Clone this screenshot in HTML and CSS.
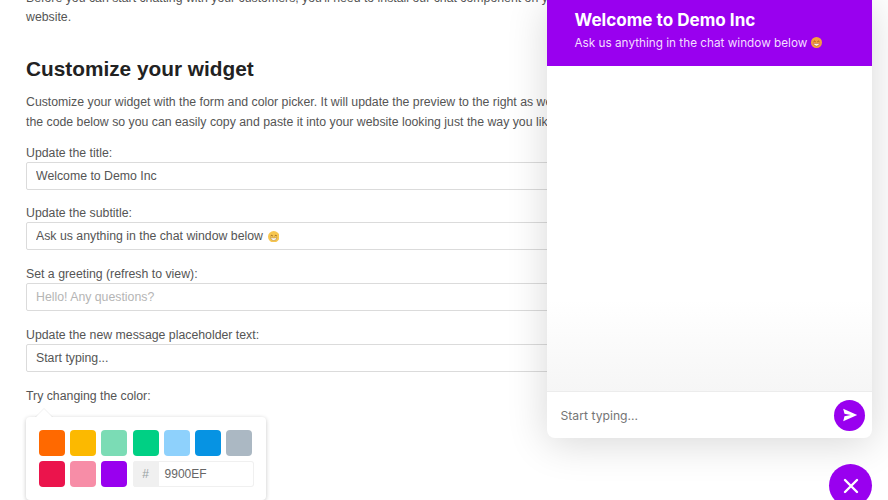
FILE: index.html
```html
<!DOCTYPE html>
<html lang="en">
<head>
<meta charset="utf-8">
<title>Customize your widget</title>
<link rel="stylesheet" href="styles.css">
</head>
<body>
<main class="page">
  <p class="copy">Before you can start chatting with your customers, you'll need to install our chat component on your website.</p>
  <h2 class="heading">Customize your widget</h2>
  <p class="copy lead">Customize your widget with the form and color picker. It will update the preview to the right as well as the code below so you can easily copy and paste it into your website looking just the way you like!</p>
  <form class="form">
    <label class="field"><span class="label">Update the title:</span><input class="input" value="Welcome to Demo Inc"></label>
    <label class="field"><span class="label">Update the subtitle:</span>
      <span class="input-wrap"><input class="input" value="Ask us anything in the chat window below"><svg class="emoji emoji-form" viewBox="0 0 20 20" aria-hidden="true"><circle cx="10" cy="10" r="10" fill="#f7c64f"/><path d="M5 8.200q1.500-2 3 0M12 8.200q1.500-2 3 0" fill="none" stroke="#7a4a1c" stroke-width="1.300" stroke-linecap="round"/><path d="M4.500 11.500q5.500 1.500 11 0q-1 5-5.500 5t-5.500-5z" fill="#fff" stroke="#9a6a24" stroke-width=".8"/></svg></span></label>
    <label class="field"><span class="label">Set a greeting (refresh to view):</span><input class="input" placeholder="Hello! Any questions?"></label>
    <label class="field"><span class="label">Update the new message placeholder text:</span><input class="input" value="Start typing..."></label>
    <div class="field">
      <span class="label">Try changing the color:</span>
      <div class="picker">
        <span class="swatch c1"></span><span class="swatch c2"></span><span class="swatch c3"></span><span class="swatch c4"></span><span class="swatch c5"></span><span class="swatch c6"></span><span class="swatch c7"></span>
        <span class="swatch c8"></span><span class="swatch c9"></span><span class="swatch c10"></span>
        <div class="hex"><span class="hash">#</span><span class="hex-value">9900EF</span></div>
      </div>
    </div>
  </form>
</main>

<aside class="widget">
  <header class="widget-head">
    <h1 class="widget-title">Welcome to Demo Inc</h1>
    <p class="widget-sub">Ask us anything in the chat window below <svg class="emoji emoji-head" viewBox="0 0 20 20" aria-hidden="true"><circle cx="10" cy="10" r="10" fill="#f5a13c"/><path d="M5 8.200q1.500-2 3 0M12 8.200q1.500-2 3 0" fill="none" stroke="#7a3a14" stroke-width="1.300" stroke-linecap="round"/><path d="M4.500 11.500q5.500 1.500 11 0q-1 5-5.500 5t-5.500-5z" fill="#fff" stroke="#a04a20" stroke-width=".8"/><circle cx="4" cy="12" r="2" fill="#ee7a6a" opacity=".6"/><circle cx="16" cy="12" r="2" fill="#ee7a6a" opacity=".6"/></svg></p>
  </header>
  <div class="widget-body"></div>
  <footer class="widget-foot">
    <span class="composer">Start typing...</span>
    <button class="send" type="button" aria-label="Send"><svg viewBox="0 0 20 20" width="16" height="16"><path d="M1.500 2.200 19 10 1.500 17.800l1.600-6.300L11 10 3.100 8.500z" fill="#fff"/></svg></button>
  </footer>
</aside>
<button class="toggle" type="button" aria-label="Close"><svg viewBox="0 0 20 20" width="20" height="20"><path d="M4 4l12 12M16 4 4 16" stroke="#fff" stroke-width="2.400" stroke-linecap="round"/></svg></button>
</body>
</html>
```
FILE: styles.css
```css
* { box-sizing: border-box; }
html, body { height: 100%; }
body {
  margin: 0;
  overflow: hidden;
  background: #fff;
  color: #555;
  font: 12.300px/19px "Liberation Sans", Arial, sans-serif;
}
.page {
  width: 630px;
  margin-top: -11px;
  padding-left: 26px;
}
.copy { width: 565px; margin: 0; }
.heading {
  margin: 25px 0 8px;
  color: #222;
  font-size: 20.800px;
  line-height: 33px;
  font-weight: 700;
}
.lead { margin-bottom: 11.500px; line-height: 19.500px; }
.form { display: flex; flex-direction: column; gap: 14.800px; }
.field { display: block; }
.label { display: block; height: 18px; line-height: 18px; }
.input-wrap { display: block; position: relative; }
.input {
  display: block;
  width: 100%;
  height: 28px;
  padding: 0 9px;
  border: 1px solid #dbdbdb;
  border-radius: 2px;
  background: #fff;
  color: #555;
  font: inherit;
  outline: 0;
}
.input::placeholder { color: #b5b5b5; opacity: 1; }
.emoji { display: inline-block; }
.emoji-form { position: absolute; left: 241.500px; top: 8.500px; width: 11.500px; height: 11.500px; }
.picker {
  position: relative;
  display: grid;
  grid-template-columns: repeat(7, 26px);
  grid-auto-rows: 26px;
  gap: 5px 5.200px;
  width: 240px;
  margin-top: 12px;
  padding: 13px;
  background: #fff;
  border-radius: 4px;
  box-shadow: 0 1px 4px rgba(0,0,0,.22);
}
.picker::before {
  content: "";
  position: absolute;
  left: 9px;
  top: -8px;
  border: solid transparent;
  border-width: 0 9px 9px;
  border-bottom-color: #fff;
  filter: drop-shadow(0 -1px 0 rgba(0,0,0,.06));
}
.swatch { border-radius: 4px; }
.c1 { background: #ff6900; }
.c2 { background: #fcb900; }
.c3 { background: #7bdcb5; }
.c4 { background: #00d084; }
.c5 { background: #8ed1fc; }
.c6 { background: #0693e3; }
.c7 { background: #abb8c3; }
.c8 { background: #eb144c; }
.c9 { background: #f78da7; }
.c10 { background: #9900ef; }
.hex {
  grid-column: span 4;
  display: flex;
  width: 121px;
  height: 26px;
  border-radius: 3px;
  box-shadow: inset 0 0 0 1px #f0f0f0;
  overflow: hidden;
  font-size: 12px;
}
.hash {
  flex: 0 0 26px;
  background: #f0f0f0;
  color: #98a1a4;
  text-align: center;
  line-height: 26px;
}
.hex-value { padding-left: 6px; color: #666; line-height: 26px; }

.widget {
  position: absolute;
  left: 547px;
  top: 0;
  display: flex;
  flex-direction: column;
  width: 325px;
  height: 438px;
  overflow: hidden;
  background: #fff;
  border-radius: 0 0 8px 8px;
  box-shadow: 0 5px 40px rgba(0,0,0,.16);
  font-family: Inter, "Liberation Sans", sans-serif;
}
.widget-head {
  flex: 0 0 66px;
  padding: 8px 27.500px 0;
  background: #9900ef;
  color: #fff;
}
.widget-title {
  margin: 0;
  font-size: 17.100px;
  line-height: 24px;
  font-weight: 700;
}
.widget-sub {
  margin: 2px 0 0;
  font-size: 11.750px;
  line-height: 18px;
  color: #f3ddff;
}
.emoji-head { width: 11px; height: 11px; vertical-align: -1px; }
.widget-body {
  flex: 1;
  background: linear-gradient(#fff 72%, #f6f6f6 100%);
}
.widget-foot {
  flex: 0 0 47px;
  display: flex;
  align-items: center;
  justify-content: space-between;
  padding: 0 7px 0 13.500px;
  border-top: 1px solid #ececec;
  font-size: 12.200px;
  color: #757575;
}
.send, .toggle {
  display: flex;
  align-items: center;
  justify-content: center;
  padding: 0;
  border: 0;
  border-radius: 50%;
  background: #9900ef;
}
.send { width: 31px; height: 31px; }
.toggle {
  position: absolute;
  left: 829px;
  top: 464px;
  width: 43px;
  height: 43px;
}
```
